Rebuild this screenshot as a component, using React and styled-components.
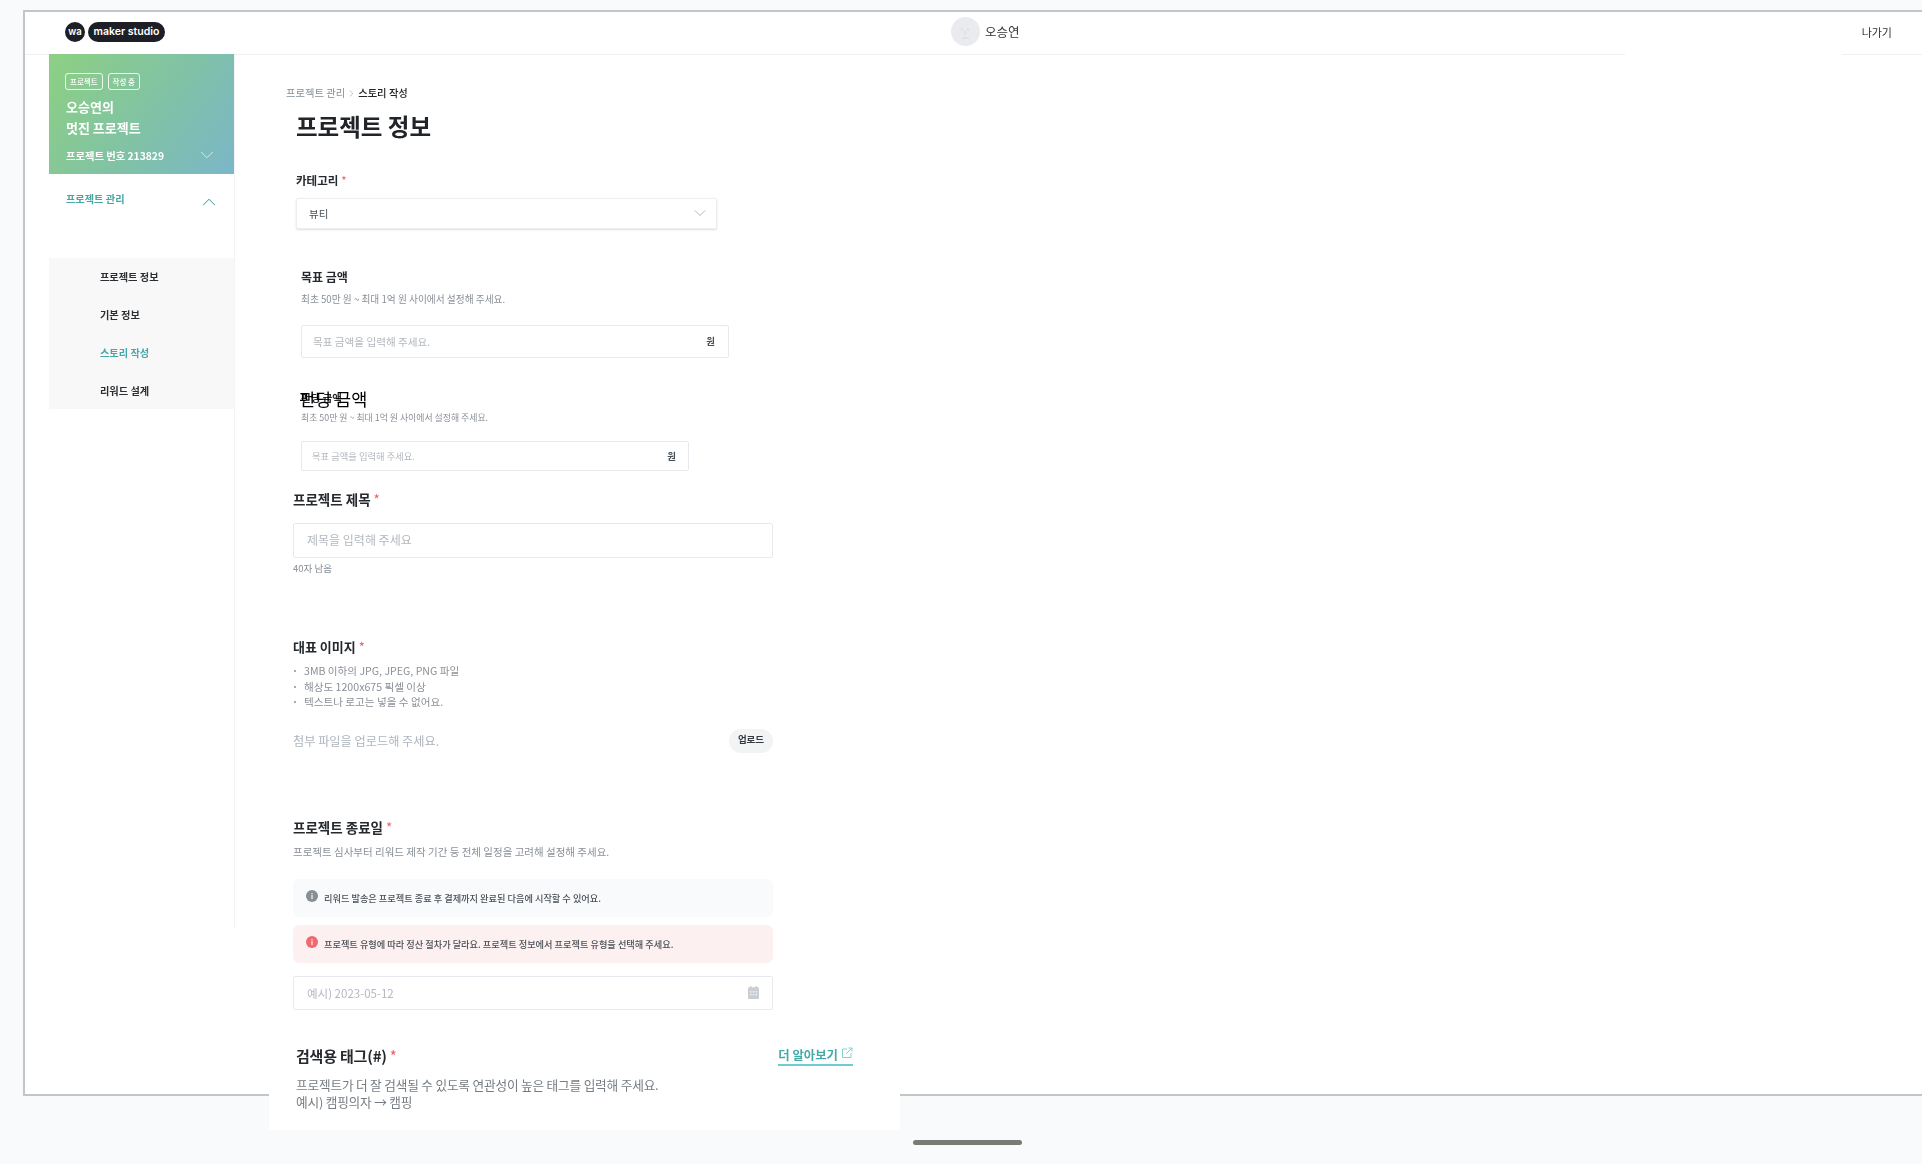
import React from 'react';
import styled, { createGlobalStyle } from 'styled-components';
import { ChevronDown, ChevronUp, ChevronRight } from 'lucide-react';

const Global = createGlobalStyle`
  html, body {
    margin: 0;
    padding: 0;
    background: #f9fafc;
  }
  body {
    font-family: 'Noto Sans CJK KR', 'Noto Sans', sans-serif;
    color: #212529;
    overflow: hidden;
  }
`;

const Page = styled.div`
  width: 1922px;
  height: 1164px;
  padding-top: 10px;
  box-sizing: border-box;
`;

const Frame = styled.div`
  margin-left: 23px;
  height: 1086px;
  box-sizing: border-box;
  background: #fff;
  border: 2px solid #c4c6c5;
  border-right: none;
`;

const Header = styled.header`
  position: relative;
  display: grid;
  grid-template-columns: 886px auto 1fr;
  align-items: center;
  height: 42px;
  box-sizing: border-box;
  padding: 0 30px 3px 40px;
  box-shadow: 0 1px 0 #f0f0f1;
  filter: blur(0.55px);

  &::after {
    content: '';
    position: absolute;
    left: 1600px;
    width: 217px;
    bottom: -2px;
    height: 3px;
    background: #fff;
  }
`;

const Logo = styled.div`
  display: flex;
  align-items: center;
  gap: 3px;
`;

const LogoMark = styled.span`
  display: flex;
  align-items: center;
  justify-content: center;
  height: 20px;
  width: ${(p) => (p.$wide ? '77px' : '20px')};
  border-radius: 10px;
  background: #1e1f26;
  color: #fff;
  font-family: Inter, sans-serif;
  font-size: ${(p) => (p.$wide ? '10.5px' : '9.5px')};
  font-weight: 600;
`;

const User = styled.div`
  display: flex;
  align-items: center;
  gap: 5px;
  font-size: 12.5px;
  color: #333;
`;

const Avatar = styled.svg`
  width: 29px;
  height: 29px;
`;

const ExitLink = styled.span`
  justify-self: end;
  font-size: 11px;
  color: #333;
`;

const Body = styled.div`
  display: flex;
  align-items: flex-start;
`;

const Sidebar = styled.aside`
  position: relative;
  flex: none;
  margin-left: 24px;
  width: 186px;
  height: 874px;
  box-sizing: border-box;
  border-right: 1px solid #f2f3f4;
`;

const ProjectCard = styled.div`
  height: 120px;
  box-sizing: border-box;
  padding: 19px 17px 0 16px;
  background: linear-gradient(125deg, #8dd082 0%, #80c1a8 58%, #7bb7c9 100%);
  color: #fff;
  filter: blur(0.55px);
`;

const Chips = styled.div`
  display: flex;
  gap: 5px;
`;

const Chip = styled.span`
  display: flex;
  align-items: center;
  justify-content: center;
  height: 15px;
  padding: 0 4px;
  border: 1px solid rgba(255, 255, 255, 0.85);
  border-radius: 3px;
  font-size: 7.5px;
  line-height: 15px;
  font-weight: 500;
`;

const ProjectName = styled.div`
  margin-top: 6px;
  padding-left: 1px;
  font-size: 13px;
  line-height: 21px;
  font-weight: 700;
`;

const ProjectNumber = styled.div`
  display: flex;
  align-items: center;
  justify-content: space-between;
  height: 20px;
  margin-top: 7px;
  padding-left: 1px;
  font-size: 10.3px;
  font-weight: 700;

  svg {
    margin-right: -1px;
    opacity: 0.75;
  }
`;

const MenuHead = styled.div`
  display: flex;
  align-items: flex-start;
  justify-content: space-between;
  height: 84px;
  box-sizing: border-box;
  padding: 17px 14px 0 17px;
  font-size: 10.2px;
  line-height: 16px;
  font-weight: 700;
  color: #4aa5a6;
  filter: blur(0.55px);
`;

const SubMenu = styled.ul`
  list-style: none;
  margin: 0;
  padding: 0;
  height: 151px;
  background: #f8f8f8;
  filter: blur(0.55px);
`;

const SubItem = styled.li`
  height: 38.2px;
  padding-top: 10.5px;
  padding-left: 51px;
  box-sizing: border-box;
  font-size: 10.2px;
  line-height: 16px;
  font-weight: 700;
  color: ${(p) => (p.$active ? '#45a9a8' : '#2b2f33')};
`;

const Main = styled.main`
  flex: none;
  width: 800px;
  padding-top: 32px;
`;

const Soft = styled.div`
  filter: blur(0.6px);
`;

const Crumbs = styled.div`
  display: flex;
  align-items: center;
  margin-left: 51px;
  font-size: 10.3px;
  line-height: 14px;
  color: #868e96;

  svg {
    margin: 1px 1px 0;
  }
`;

const CrumbNow = styled.span`
  color: #212529;
  font-weight: 500;
`;

const PageTitle = styled.h1`
  margin: 10px 0 0 61px;
  font-size: 23.5px;
  line-height: 32px;
  font-weight: 700;
  color: #212529;
`;

const Star = styled.span`
  margin-left: 3px;
  color: #f25c5c;
  font-weight: 400;
`;

const FieldLabel = styled.div`
  margin-top: ${(p) => p.$top || 0}px;
  margin-left: ${(p) => p.$left || 58}px;
  font-size: ${(p) => p.$size || 13.5}px;
  line-height: ${(p) => p.$line || 18}px;
  font-weight: 700;
  color: #25292d;
`;

const Hint = styled.div`
  margin-top: ${(p) => p.$top}px;
  margin-left: ${(p) => p.$left || 58}px;
  font-size: ${(p) => p.$size || 10.5}px;
  line-height: 14px;
  color: #8a9098;
`;

const InputBox = styled.div`
  display: flex;
  align-items: center;
  justify-content: space-between;
  box-sizing: border-box;
  margin-top: ${(p) => p.$top}px;
  margin-left: ${(p) => p.$left || 58}px;
  width: ${(p) => p.$width || 480}px;
  height: ${(p) => p.$height}px;
  padding: 0 ${(p) => p.$pad || 13}px ${(p) => p.$lift ?? 1}px ${(p) => p.$pad || 13}px;
  background: #fff;
  border: 1px solid #e7e9ee;
  border-radius: 2px;
  font-size: ${(p) => p.$size || 12}px;
  color: #b3b9bf;
`;

const SelectBox = styled(InputBox)`
  padding-left: 12px;
  border-color: #eceef1;
  box-shadow: 0 1px 2px rgba(60, 70, 90, 0.18);
  color: #495057;

  svg {
    margin-right: -7px;
    color: #a5abb2;
  }
`;

const Unit = styled.span`
  margin-right: 2px;
  color: #495057;
  font-weight: 700;
  font-size: 9.5px;
`;

const FundingGroup = styled.div`
  position: relative;
`;

const FundingOverlay = styled.div`
  position: absolute;
  left: 64px;
  top: -3px;
  font-size: 17.5px;
  line-height: 22px;
  color: #000;
`;

const Note = styled.div`
  margin: 4px 0 0 58px;
  font-size: 9.5px;
  line-height: 12px;
  color: #868e96;
`;

const Bullets = styled.ul`
  list-style: none;
  margin: 7px 0 0 58px;
  padding: 0;
`;

const Bullet = styled.li`
  position: relative;
  padding-left: 11px;
  font-size: 10.6px;
  line-height: 15.5px;
  color: #8a9098;

  &::before {
    content: '';
    position: absolute;
    left: 1px;
    top: 7px;
    width: 2px;
    height: 2px;
    border-radius: 50%;
    background: #8a9098;
  }
`;

const UploadRow = styled.div`
  display: flex;
  align-items: center;
  justify-content: space-between;
  width: 480px;
  height: 24px;
  margin: 19px 0 0 58px;
  font-size: 12.2px;
  color: #adb5bd;
`;

const UploadButton = styled.button`
  width: 44px;
  height: 24px;
  padding: 0 0 3px;
  border: none;
  border-radius: 12px;
  background: #f1f3f5;
  font-family: inherit;
  font-size: 9.5px;
  font-weight: 700;
  color: #343a40;
`;

const Notice = styled.div`
  display: flex;
  align-items: center;
  gap: 6px;
  box-sizing: border-box;
  width: 480px;
  height: 38px;
  margin: ${(p) => p.$top}px 0 0 58px;
  padding-left: 13px;
  border-radius: 6px;
  background: ${(p) => (p.$danger ? '#fdf0f0' : '#f9fafb')};
  font-size: 9.2px;
  font-weight: 500;
  color: #495057;

  svg {
    flex: none;
    margin-bottom: 3px;
  }
`;

const TagPanel = styled.section`
  box-sizing: border-box;
  width: 631px;
  margin: 30px 0 0 34px;
  padding: 6px 47px 19px 27px;
  background: #fff;
`;

const TagHead = styled.div`
  display: flex;
  align-items: flex-start;
  justify-content: space-between;
`;

const TagTitle = styled.div`
  font-size: 15px;
  line-height: 20px;
  font-weight: 700;
  letter-spacing: -0.2px;
  color: #25292d;
`;

const LearnMore = styled.a`
  display: flex;
  align-items: flex-start;
  gap: 3px;
  height: 20px;
  box-sizing: border-box;
  border-bottom: 2px solid #6fcdcd;
  font-size: 12.4px;
  line-height: 19px;
  font-weight: 700;
  color: #45a9a8;

  svg {
    margin-top: 1px;
    color: #7ed2d2;
  }
`;

const TagText = styled.p`
  margin: 10px 0 0;
  font-size: 12.7px;
  line-height: 17.5px;
  letter-spacing: -0.2px;
  color: #767c83;
`;

const HomeBar = styled.div`
  width: 109px;
  height: 5px;
  margin: 44px 0 0 913px;
  border-radius: 3px;
  background: #7a7b78;
`;

const NoticeIcon = ({ color }) => (
  <svg width="12" height="12" viewBox="0 0 12 12">
    <circle cx="6" cy="6" r="6" fill={color} />
    <rect x="5.3" y="5" width="1.4" height="4" fill="#fff" opacity="0.8" />
    <rect x="5.3" y="3" width="1.4" height="1.3" fill="#fff" opacity="0.8" />
  </svg>
);

const CalendarIcon = () => (
  <svg width="11" height="13" viewBox="0 0 11 13" fill="#c9ced3">
    <rect x="2" y="0" width="1.4" height="2.5" />
    <rect x="7.6" y="0" width="1.4" height="2.5" />
    <path d="M0 2.5C0 1.7.6 1.2 1.2 1.2h8.6c.6 0 1.2.5 1.2 1.3V12c0 .6-.5 1-1.2 1H1.2C.5 13 0 12.6 0 12z" />
    <path d="M2 5h1.5v1.5H2zM4.8 5h1.5v1.5H4.8zM7.5 5H9v1.5H7.5zM2 7.8h1.5v1.5H2zM4.8 7.8h1.5v1.5H4.8zM7.5 7.8H9v1.5H7.5z" fill="#eef0f2" />
  </svg>
);

const ExternalIcon = () => (
  <svg width="12" height="12" viewBox="0 0 12 12" fill="none" stroke="currentColor" strokeWidth="1">
    <path d="M6 2H1.5v8.5H10V6" />
    <path d="M5 7l6-6M7.5 1H11v3.5" />
  </svg>
);

class App extends React.Component {
  render() {
    return (
      <Page>
        <Global />
        <Frame>
          <Header>
            <Logo>
              <LogoMark>wa</LogoMark>
              <LogoMark $wide>maker studio</LogoMark>
            </Logo>
            <User>
              <Avatar viewBox="0 0 29 29">
                <circle cx="14.5" cy="14.5" r="14.5" fill="#eaebef" />
                <path d="M11 11v3M17 11v3M14 14v4M11 21h7" stroke="#d6d8dc" strokeWidth="1" fill="none" />
              </Avatar>
              오승연
            </User>
            <ExitLink>나가기</ExitLink>
          </Header>
          <Body>
            <Sidebar>
              <ProjectCard>
                <Chips>
                  <Chip>프로젝트</Chip>
                  <Chip>작성 중</Chip>
                </Chips>
                <ProjectName>
                  오승연의
                  <br />
                  멋진 프로젝트
                </ProjectName>
                <ProjectNumber>
                  프로젝트 번호 213829
                  <ChevronDown size={22} strokeWidth={1} />
                </ProjectNumber>
              </ProjectCard>
              <MenuHead>
                프로젝트 관리
                <ChevronUp size={22} strokeWidth={1.1} />
              </MenuHead>
              <SubMenu>
                <SubItem>프로젝트 정보</SubItem>
                <SubItem>기본 정보</SubItem>
                <SubItem $active>스토리 작성</SubItem>
                <SubItem>리워드 설계</SubItem>
              </SubMenu>
            </Sidebar>
            <Main>
              <Soft>
                <Crumbs>
                  프로젝트 관리
                  <ChevronRight size={11} strokeWidth={1.2} />
                  <CrumbNow>스토리 작성</CrumbNow>
                </Crumbs>
                <PageTitle>프로젝트 정보</PageTitle>
                <FieldLabel $top={30} $left={61} $size={11.5} $line={16}>
                  카테고리<Star>*</Star>
                </FieldLabel>
                <SelectBox $top={10} $left={61} $width={421} $height={31} $size={10.5}>
                  뷰티
                  <ChevronDown size={20} strokeWidth={1} />
                </SelectBox>
                <FieldLabel $top={40} $left={66} $size={12} $line={16}>
                  목표 금액
                </FieldLabel>
                <Hint $top={7} $left={66} $size={9.7}>
                  최초 50만 원 ~ 최대 1억 원 사이에서 설정해 주세요.
                </Hint>
                <InputBox $top={19} $left={66} $width={428} $height={33} $size={10.6} $pad={11}>
                  목표 금액을 입력해 주세요.
                  <Unit>원</Unit>
                </InputBox>
              </Soft>
              <FundingGroup>
                <Soft>
                  <FieldLabel $top={33} $left={66} $size={10.5} $line={14}>
                    펀딩 금액
                  </FieldLabel>
                  <Hint $top={6} $left={66} $size={8.9}>
                    최초 50만 원 ~ 최대 1억 원 사이에서 설정해 주세요.
                  </Hint>
                  <InputBox $top={16} $left={66} $width={388} $height={30} $size={9.3} $pad={10}>
                    목표 금액을 입력해 주세요.
                    <Unit>원</Unit>
                  </InputBox>
                </Soft>
                <FundingOverlay>펀딩 금액</FundingOverlay>
              </FundingGroup>
              <Soft>
                <FieldLabel $top={19}>
                  프로젝트 제목<Star>*</Star>
                </FieldLabel>
                <InputBox $top={15} $height={35} $lift={2}>
                  제목을 입력해 주세요
                </InputBox>
                <Note>40자 남음</Note>
                <FieldLabel $top={64} $size={13}>
                  대표 이미지<Star>*</Star>
                </FieldLabel>
                <Bullets>
                  <Bullet>3MB 이하의 JPG, JPEG, PNG 파일</Bullet>
                  <Bullet>해상도 1200x675 픽셀 이상</Bullet>
                  <Bullet>텍스트나 로고는 넣을 수 없어요.</Bullet>
                </Bullets>
                <UploadRow>
                  첨부 파일을 업로드해 주세요.
                  <UploadButton>업로드</UploadButton>
                </UploadRow>
                <FieldLabel $top={65}>
                  프로젝트 종료일<Star>*</Star>
                </FieldLabel>
                <Hint $top={9}>프로젝트 심사부터 리워드 제작 기간 등 전체 일정을 고려해 설정해 주세요.</Hint>
                <Notice $top={20}>
                  <NoticeIcon color="#868e96" />
                  리워드 발송은 프로젝트 종료 후 결제까지 완료된 다음에 시작할 수 있어요.
                </Notice>
                <Notice $top={8} $danger>
                  <NoticeIcon color="#f0696c" />
                  프로젝트 유형에 따라 정산 절차가 달라요. 프로젝트 정보에서 프로젝트 유형을 선택해 주세요.
                </Notice>
                <InputBox $top={13} $height={34} $size={11.5} $lift={0}>
                  예시) 2023-05-12
                  <CalendarIcon />
                </InputBox>
                <TagPanel>
                  <TagHead>
                    <TagTitle>
                      검색용 태그(#)<Star>*</Star>
                    </TagTitle>
                    <LearnMore>
                      더 알아보기
                      <ExternalIcon />
                    </LearnMore>
                  </TagHead>
                  <TagText>
                    프로젝트가 더 잘 검색될 수 있도록 연관성이 높은 태그를 입력해 주세요.
                    <br />
                    예시) 캠핑의자 → 캠핑
                  </TagText>
                </TagPanel>
              </Soft>
            </Main>
          </Body>
        </Frame>
        <HomeBar />
      </Page>
    );
  }
}

export default App;
